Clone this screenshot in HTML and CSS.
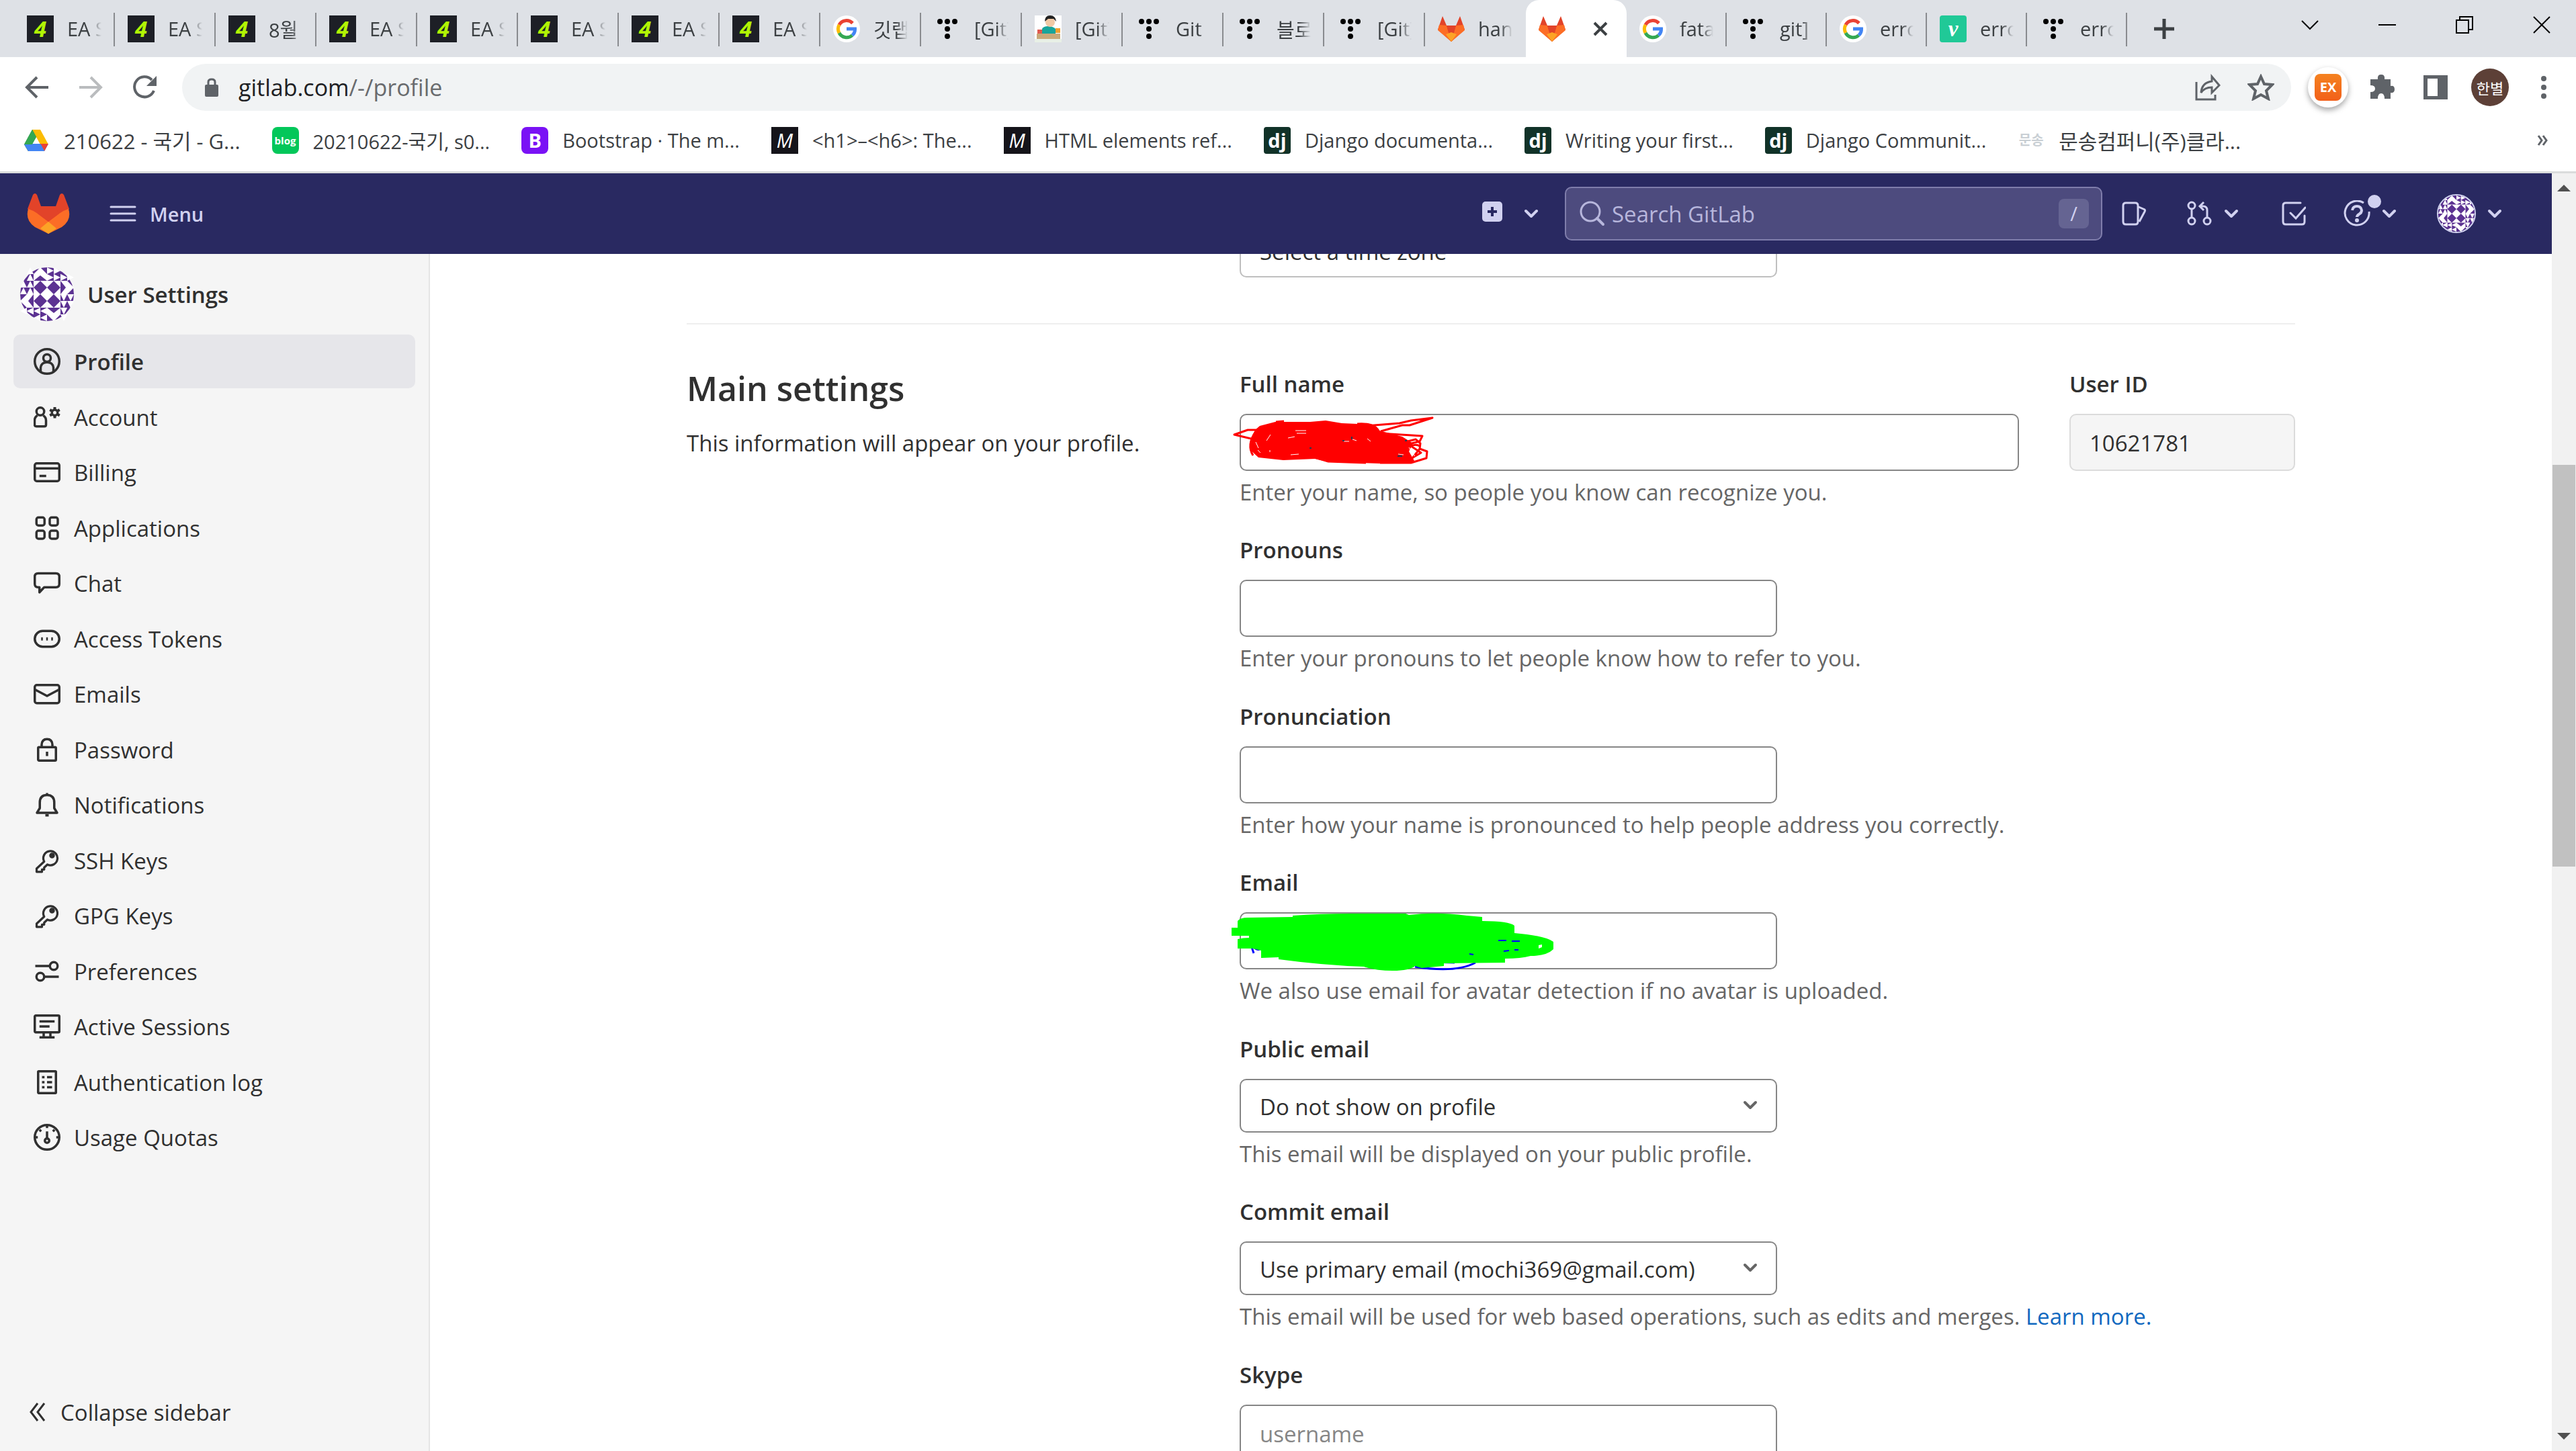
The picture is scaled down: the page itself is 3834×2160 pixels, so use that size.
FILE: index.html
```html
<!DOCTYPE html>
<html lang="en">
<head>
  <meta charset="UTF-8" />
  <meta name="viewport" content="width=device-width, initial-scale=1.0"/>
  <title>Edit Profile · User Settings · GitLab</title>
  <link rel="stylesheet" href="styles.css">
</head>
<body>
  <!-- shared icons -->
  <svg class="sprite" width="0" height="0" aria-hidden="true">
    <symbol id="google" viewBox="0 0 40 40">
      <circle cx="20" cy="20" r="20" fill="#fff"/>
      <g fill="none" stroke-width="5">
        <path d="M29 11.500A12.500 12.500 0 0 0 9 14" stroke="#ea4335"/>
        <path d="M9 14a12.500 12.500 0 0 0 0 12" stroke="#fbbc05"/>
        <path d="M9 26a12.500 12.500 0 0 0 19.500 3.500" stroke="#34a853"/>
        <path d="M28.500 29.500a12 12 0 0 0 4-9.500H20" stroke="#4285f4"/>
      </g>
    </symbol>
    <symbol id="tistory" viewBox="0 0 40 40">
      <circle cx="9" cy="9" r="4"/><circle cx="20" cy="9" r="4"/><circle cx="31" cy="9" r="4"/>
      <circle cx="20" cy="20" r="4"/><circle cx="20" cy="31" r="4"/>
    </symbol>
    <symbol id="fox" viewBox="0 0 40 40">
      <path d="M7 1 0 21l20 18 20-18L33 1l-6 14H13z" fill="#e24329"/>
      <path d="M2 14 0 22l20 17-7-24zM38 14l2 8-20 17 7-24z" fill="#fc6d26"/>
      <path d="M13 15h14l-7 24z" fill="#e24329"/>
      <path d="m12 28 8 11 8-11-8-3z" fill="#fca326"/>
    </symbol>
    <symbol id="person" viewBox="0 0 40 40">
      <path fill="#fff" d="M0 0h40v40H0z"/>
      <path fill="#e8f0e6" d="M0 35h40v5H0z"/>
      <path fill="#18a59b" d="M11 29V20q2-4 9-4t11 4v9z"/>
      <path fill="#c9a878" d="M3 27h35v8H3z"/>
      <circle cx="23" cy="10" r="7" fill="#f1c9a5"/>
      <path fill="#222" d="M15 9q0-9 8-9t9 9l-4-4h-8z"/>
      <path fill="#e05a4f" d="M4 21h7v6H4z"/><path fill="#f0a030" d="M31 19h7v7h-7z"/>
    </symbol>
    <symbol id="chevron" viewBox="0 0 30 30">
      <path d="m7 11 8 8 8-8" fill="none" stroke="currentColor" stroke-width="4" stroke-linecap="round" stroke-linejoin="round"/>
    </symbol>
    <symbol id="quadrant" viewBox="-4 -4 8 8" overflow="visible">
      <path d="M0-4l1 .5-1 .5zM1-4l1 .5-1 .5zM0-3l1 .5-1 .5zM1-3l1 .5-1 .5zM-2-3l1-1 1 1v1l-1-.8-1 .8zM2-3l1 .5-1 .5zM3-3l.6.5-.6.5zM-3-3l.5-1 .5 1zM-3-2l.5-1 .5 1z"/>
    </symbol>
    <symbol id="identicon" viewBox="-4 -4 8 8">
      <circle r="4" fill="#5c3292"/>
      <g fill="#fff">
        <g><use href="#quadrant" x="-4" y="-4" width="8" height="8"/></g>
        <g transform="rotate(90)"><use href="#quadrant" x="-4" y="-4" width="8" height="8"/></g>
        <g transform="rotate(180)"><use href="#quadrant" x="-4" y="-4" width="8" height="8"/></g>
        <g transform="rotate(270)"><use href="#quadrant" x="-4" y="-4" width="8" height="8"/></g>
        <path d="M-2-2h4v4h-4z"/>
      </g>
      <path d="m-1-2 1 1-1 1-1-1zM1-2l1 1-1 1-1-1zM-1 0l1 1-1 1-1-1zM1 0l1 1-1 1-1-1z" fill="#5c3292"/>
    </symbol>
    <symbol id="key" viewBox="0 0 16 16">
      <path d="M6.300 8.600 1.800 12.800V14.700H5V13.300H6.300V12.200L8.200 10.400A4.200 4.200 0 1 0 6.300 8.600z" fill="none" stroke="currentColor" stroke-width="1.300"/>
      <circle cx="11" cy="5" r="1" fill="currentColor"/>
    </symbol>
  </svg>

  <header class="browser">
    <div class="tab-strip">
      <div class="tab"><span class="favicon ea">4</span><span class="tab-title">EA SP</span></div>
      <div class="tab"><span class="favicon ea">4</span><span class="tab-title">EA SP</span></div>
      <div class="tab"><span class="favicon ea">4</span><span class="tab-title">8월</span></div>
      <div class="tab"><span class="favicon ea">4</span><span class="tab-title">EA SP</span></div>
      <div class="tab"><span class="favicon ea">4</span><span class="tab-title">EA SP</span></div>
      <div class="tab"><span class="favicon ea">4</span><span class="tab-title">EA SP</span></div>
      <div class="tab"><span class="favicon ea">4</span><span class="tab-title">EA SP</span></div>
      <div class="tab"><span class="favicon ea">4</span><span class="tab-title">EA SP</span></div>
      <div class="tab"><svg class="favicon"><use href="#google"/></svg><span class="tab-title">깃랩</span></div>
      <div class="tab"><svg class="favicon"><use href="#tistory"/></svg><span class="tab-title">[Git]</span></div>
      <div class="tab"><svg class="favicon"><use href="#person"/></svg><span class="tab-title">[Git]</span></div>
      <div class="tab"><svg class="favicon"><use href="#tistory"/></svg><span class="tab-title">Git</span></div>
      <div class="tab"><svg class="favicon"><use href="#tistory"/></svg><span class="tab-title">블로</span></div>
      <div class="tab"><svg class="favicon"><use href="#tistory"/></svg><span class="tab-title">[Git]</span></div>
      <div class="tab no-line"><svg class="favicon"><use href="#fox"/></svg><span class="tab-title">han</span></div>
      <div class="tab active">
        <svg class="favicon"><use href="#fox"/></svg>
        <button class="tab-close" aria-label="Close tab"><svg viewBox="0 0 22 22"><path d="m2 2 18 18M20 2 2 20" stroke="#3c4043" stroke-width="4"/></svg></button>
      </div>
      <div class="tab"><svg class="favicon"><use href="#google"/></svg><span class="tab-title">fatal</span></div>
      <div class="tab"><svg class="favicon"><use href="#tistory"/></svg><span class="tab-title">git]</span></div>
      <div class="tab"><svg class="favicon"><use href="#google"/></svg><span class="tab-title">error</span></div>
      <div class="tab"><span class="favicon velog">v</span><span class="tab-title">error</span></div>
      <div class="tab"><svg class="favicon"><use href="#tistory"/></svg><span class="tab-title">error</span></div>
      <button class="new-tab" aria-label="New tab"><svg viewBox="0 0 30 30"><path d="M15 0v30M0 15h30" stroke="#3c4043" stroke-width="5"/></svg></button>
      <div class="window-buttons">
        <button aria-label="Search tabs"><svg viewBox="0 0 26 26"><path d="m1 7 12 12L25 7"/></svg></button>
        <button aria-label="Minimize"><svg viewBox="0 0 26 26"><path d="M0 13h26"/></svg></button>
        <button aria-label="Restore"><svg viewBox="0 0 26 26"><path d="M1 6h18v19H1zM6 6V1h19v19h-6"/></svg></button>
        <button aria-label="Close"><svg viewBox="0 0 26 26"><path d="m1 1 24 24M25 1 1 25"/></svg></button>
      </div>
    </div>

    <div class="toolbar">
      <button aria-label="Back"><svg viewBox="0 0 40 40"><path d="M37 20H6M20 5 5 20l15 15" fill="none" stroke="#5f6368" stroke-width="4"/></svg></button>
      <button aria-label="Forward"><svg viewBox="0 0 40 40"><path d="M3 20h31M20 5l15 15-15 15" fill="none" stroke="#babcbe" stroke-width="4"/></svg></button>
      <button aria-label="Reload"><svg viewBox="0 0 40 40"><path d="M34 25a15 15 0 1 1-3-16" fill="none" stroke="#5f6368" stroke-width="4"/><path d="M38 3v15H23z" fill="#5f6368"/></svg></button>
      <div class="address">
        <svg class="lock" viewBox="0 0 20 28"><path d="M2 10h16q2 0 2 2v14q0 2-2 2H2q-2 0-2-2V12q0-2 2-2z" fill="#5f6368"/><path d="M5 11V6q0-4 5-4t5 4v5" fill="none" stroke="#5f6368" stroke-width="3"/></svg>
        <span class="url">gitlab.com<span>/-/profile</span></span>
        <button aria-label="Share"><svg viewBox="0 0 40 40"><path d="M4 12v26h28v-7M11 28q1-15 16-17V4l11 13-11 11v-8q-11 0-16 8z" fill="none" stroke="#5f6368" stroke-width="3"/></svg></button>
        <button aria-label="Bookmark"><svg viewBox="0 0 40 40"><path d="m20 4 5 11 12 1-9 9 3 12-11-6-11 6 3-12-9-9 12-1z" fill="none" stroke="#5f6368" stroke-width="4"/></svg></button>
      </div>
      <button class="ext" aria-label="EX extension"><span>EX</span></button>
      <div class="actions">
        <button aria-label="Extensions"><svg viewBox="0 0 40 40"><path d="M5 8h9q-1-7 5-7t5 7h9v10q6-1 6 5t-6 5v9H24q0-8-5-8t-5 8H3V27q7 0 7-5t-7-5V8z" fill="#5f6368"/></svg></button>
        <button aria-label="Side panel"><svg viewBox="0 0 40 40"><path d="M2 2h36v36H2zM8 7v26h15V7z" fill="#5f6368" fill-rule="evenodd"/></svg></button>
      </div>
      <button class="account">한별</button>
      <button class="more" aria-label="More"><svg viewBox="0 0 8 34"><circle cx="4" cy="4" r="4"/><circle cx="4" cy="17" r="4"/><circle cx="4" cy="30" r="4"/></svg></button>
    </div>

    <nav class="bookmarks">
      <a href="#" class="ko"><svg class="favicon" viewBox="0 0 40 40"><path d="M14 4h12L8 36 2 26z" fill="#188038"/><path d="M14 4h12l12 22H26z" fill="#fbbc04"/><path d="M8 25h30l-6 11H8z" fill="#4285f4"/><path d="m2 25 6 11 6-11zM38 25l-6 11-6-11z" fill="#ea4335"/><path d="M2 26 14 4l6 11L8 36z" fill="#34a853"/><path d="m2 26 6 10h24l-5-10z" fill="#4285f4"/></svg><span>210622 - 국기 - G...</span></a>
      <a href="#"><span class="favicon blog">blog</span><span>20210622-국기, s0...</span></a>
      <a href="#"><span class="favicon bs">B</span><span>Bootstrap · The m...</span></a>
      <a href="#"><span class="favicon mdn">M</span><span>&lt;h1&gt;–&lt;h6&gt;: The...</span></a>
      <a href="#"><span class="favicon mdn">M</span><span>HTML elements ref...</span></a>
      <a href="#"><span class="favicon dj">dj</span><span>Django documenta...</span></a>
      <a href="#"><span class="favicon dj">dj</span><span>Writing your first...</span></a>
      <a href="#"><span class="favicon dj">dj</span><span>Django Communit...</span></a>
      <a href="#" class="ko"><span class="favicon ms">문송</span><span>문송컴퍼니(주)클라...</span></a>
      <button class="overflow" aria-label="More bookmarks"><svg viewBox="0 0 16 16"><path d="m2 1 5 7-5 7M9 1l5 7-5 7" fill="none" stroke="#5f6368" stroke-width="3"/></svg></button>
    </nav>
  </header>

  <div class="viewport">
    <div class="page">
      <header class="navbar">
        <a href="#" class="logo" aria-label="GitLab">
          <svg viewBox="0 0 64 60"><path d="M9 2q3-4 6 0l6 17h22l6-17q3-4 6 0l8 21-31 30L1 23z" fill="#e24329"/><path d="M2 23q-5 17 10 27l20 10 20-10q15-10 10-27-7 2-14 7L32 42 16 30q-7-5-14-7z" fill="#fc6d26"/><path d="m20 52 12-10 12 10-12 8z" fill="#fca326"/><path d="M32 42 16 30l6-11h20l6 11z" fill="#e24329"/></svg>
        </a>
        <button class="menu"><svg viewBox="0 0 40 40"><path d="M2 10h36M2 20h36M2 30h36" stroke="currentColor" stroke-width="3" stroke-linecap="round"/></svg>Menu</button>
        <button class="new" aria-label="Create new"><svg viewBox="0 0 40 40"><rect x="5" y="2" width="30" height="30" rx="5" fill="currentColor"/><path d="M20 10v14M13 17h14" stroke="#292961" stroke-width="4"/></svg><svg class="chev"><use href="#chevron"/></svg></button>
        <div class="search">
          <svg viewBox="0 0 40 40"><circle cx="18" cy="17" r="14" fill="none" stroke="currentColor" stroke-width="3"/><path d="m28 27 9 9" stroke="currentColor" stroke-width="4" stroke-linecap="round"/></svg>
          <input type="text" placeholder="Search GitLab" aria-label="Search GitLab" />
          <kbd>/</kbd>
        </div>
        <div class="nav-icons">
          <a href="#" aria-label="Issues"><svg viewBox="0 0 40 40"><path d="M7 4h14q4 0 4 4v24q0 4-4 4H7q-4 0-4-4V8q0-4 4-4zM26 10l9 4q1 1 0 3l-8 15" fill="none" stroke="currentColor" stroke-width="3"/></svg></a>
          <a href="#" aria-label="Merge requests"><svg viewBox="0 0 40 40"><g fill="none" stroke="currentColor" stroke-width="3"><circle cx="9" cy="8" r="5"/><circle cx="9" cy="31" r="5"/><circle cx="32" cy="31" r="5"/><path d="M9 13v13M32 26V15q0-6-6-6h-4M27 3l-6 6 6 6"/></g></svg><svg class="chev"><use href="#chevron"/></svg></a>
          <a href="#" aria-label="To-do list"><svg viewBox="0 0 40 40"><path d="M32 4H10q-4 0-4 4v24q0 4 4 4h24q4 0 4-4v-9M17 19l8 8L39 11" fill="none" stroke="currentColor" stroke-width="3" stroke-linecap="round"/></svg></a>
          <button class="help" aria-label="Help"><svg viewBox="0 0 40 40"><path d="M30 4A18 18 0 1 0 38 17" fill="none" stroke="currentColor" stroke-width="3"/><path d="M13 15q1-6 7-6t7 6q0 4-4 6-3 2-3 4" fill="none" stroke="currentColor" stroke-width="4"/><circle cx="20" cy="30" r="3" fill="currentColor"/></svg><i class="dot"></i><svg class="chev"><use href="#chevron"/></svg></button>
          <button aria-label="Account"><svg class="avatar"><use href="#identicon"/></svg><svg class="chev"><use href="#chevron"/></svg></button>
        </div>
      </header>

      <div class="content">
        <aside class="sidebar">
          <a href="#" class="context"><svg class="avatar"><use href="#identicon"/></svg>User Settings</a>
          <ul>
            <li><a href="#" class="current"><svg viewBox="0 0 16 16"><circle cx="8" cy="8" r="7.300"/><circle cx="8" cy="6" r="2.200"/><path d="M4.200 14v-2.300Q4.600 8.500 8 8.500t3.800 3.200V14"/></svg>Profile</a></li>
            <li><a href="#"><svg viewBox="0 0 16 16"><circle cx="4" cy="4.600" r="2.300"/><path d="M2.300 7Q.6 8 .6 10v2.500q0 1 1 1h4.800q1 0 1-1V10q0-2-1.700-3"/><circle cx="12.600" cy="5.300" r="1.700"/><path d="M12.600 2v1.500M12.600 7v1.600M9.700 3.600l1.400.8M14.100 6.200l1.400.8M9.700 7l1.400-.8M14.100 4.400l1.400-.8" stroke-width="1.600"/></svg>Account</a></li>
            <li><a href="#"><svg viewBox="0 0 16 16"><rect x=".7" y="2.700" width="14.600" height="10.600" rx="1.200"/><path d="M1 5.700h14M3.500 10.200h4"/></svg>Billing</a></li>
            <li><a href="#"><svg viewBox="0 0 16 16"><rect x="1.700" y="1.700" width="4.800" height="4.800" rx="1.200"/><rect x="9.600" y="1.700" width="4.800" height="4.800" rx="1.200"/><rect x="1.700" y="9.600" width="4.800" height="4.800" rx="1.200"/><rect x="9.600" y="9.600" width="4.800" height="4.800" rx="1.200"/></svg>Applications</a></li>
            <li><a href="#"><svg viewBox="0 0 16 16"><path d="M2.700 2.200h10.600q2 0 2 2v4.300q0 2-2 2H6.300L3.500 13.500v-3h-.8q-2 0-2-2V4.200q0-2 2-2z"/></svg>Chat</a></li>
            <li><a href="#"><svg viewBox="0 0 16 16"><rect x=".7" y="3.300" width="14.600" height="9.400" rx="4.700"/><path d="M4.500 8h1M7.500 8h1M10.500 8h1" stroke-width="1.900"/></svg>Access Tokens</a></li>
            <li><a href="#"><svg viewBox="0 0 16 16"><rect x=".7" y="2.700" width="14.600" height="10.800" rx="1.200"/><path d="m1 5.500 7 3.700 7-3.700"/></svg>Emails</a></li>
            <li><a href="#"><svg viewBox="0 0 16 16"><rect x="2.700" y="6.500" width="10.600" height="8" rx=".6"/><path d="M4.800 6.200V5Q5 1.700 8 1.700t3.200 3.300v1.200M8 9.200v2.600" /></svg>Password</a></li>
            <li><a href="#"><svg viewBox="0 0 16 16"><path d="M8 2.200q-4.300 0-4.300 4.500V10L2 12.800h12L12.300 10V6.700Q12.300 2.200 8 2.200zM8 1v1M7 14.300h2"/></svg>Notifications</a></li>
            <li><a href="#"><svg><use href="#key"/></svg>SSH Keys</a></li>
            <li><a href="#"><svg><use href="#key"/></svg>GPG Keys</a></li>
            <li><a href="#"><svg viewBox="0 0 16 16"><circle cx="12" cy="4.800" r="2.300"/><circle cx="4" cy="11.200" r="2.300"/><path d="M1 4.800h8.500M6.500 11.200H15"/></svg>Preferences</a></li>
            <li><a href="#"><svg viewBox="0 0 16 16"><rect x=".7" y="1.500" width="14.600" height="10" rx=".6"/><path d="M3.500 5h9M3.500 8h6M3.500 14.500h9M6 12v2M10 12v2"/></svg>Active Sessions</a></li>
            <li><a href="#"><svg viewBox="0 0 16 16"><rect x="2.700" y="1.500" width="10.600" height="13" rx=".4"/><path d="M5 5h1.500M8 5h3M5 8h1.500M8 8h3M5 11h1.500M8 11h3"/></svg>Authentication log</a></li>
            <li><a href="#"><svg viewBox="0 0 16 16"><circle cx="8" cy="8" r="7.300"/><path d="M8 4.500V9M8 1v1.500M1 8h1.500M13.500 8H15M3.500 3.500l1 1M12.500 3.500l-1 1"/><circle cx="8" cy="10" r="1.300"/></svg>Usage Quotas</a></li>
          </ul>
          <button class="collapse"><svg viewBox="0 0 24 30"><path d="M12 2 2 15l10 13M22 2 12 15l10 13" fill="none" stroke="currentColor" stroke-width="3"/></svg>Collapse sidebar</button>
        </aside>

        <main>
          <form class="container">
            <section class="settings time">
              <div></div>
              <div class="select"><select aria-label="Time zone"><option>Select a time zone</option></select><svg><use href="#chevron"/></svg></div>
            </section>
            <hr>
            <section class="settings">
              <div>
                <h4>Main settings</h4>
                <p>This information will appear on your profile.</p>
              </div>
              <div>
                <div class="row">
                  <div class="form-group name">
                    <label for="name">Full name</label>
                    <div class="field">
                      <input type="text" id="name" />
                      <svg class="scribble" viewBox="0 0 300 85">
                        <path fill="red" d="m33 24 7-6 23-6h52l23-2 24 4 23 1 20 1 13 9 34 9 16 10-6 12 8 14-8 4-44 0-26-1-57-3-13-3-47 2-37-4-13-12 2-14z"/>
                        <g fill="none" stroke="red" stroke-width="3" stroke-linejoin="round">
                          <path d="M43 24H22L2 31l25 6M198 18l50-4 17-4 32-4-34 11h-11l-32 9M185 15q28-2 33 13M218 29l64 4-4 8-20 5M256 42l16-4 7 6-1 8 11 4-1 10-23 7h-46M278 52l-14 18M250 56q20-14 28-8M262 46l18 12-24 14"/>
                          <path d="M34 26q-14 20-4 36M64 12l12-1M122 65l20 6 56 2"/>
                        </g>
                        <path fill="none" stroke="#fff" stroke-width="1" d="m34 42 4 9M37 54l4 4M56 31l-6 9M55 54v3M93 25h16M95 29h14M82 36l10-2M178 38l6 2M200 37l5 4M246 60l8 1M262 50l3 5M268 60l3 3M165 41h8M86 61l12-1"/>
                        <path stroke="#233a55" stroke-width="2" d="M114 51h3M177 34v4M163 40h3M256 40h3M245 63h7"/>
                      </svg>
                    </div>
                    <small>Enter your name, so people you know can recognize you.</small>
                  </div>
                  <div class="form-group id">
                    <label for="uid">User ID</label>
                    <input type="text" id="uid" value="10621781" readonly />
                  </div>
                </div>
                <div class="form-group">
                  <label for="pronouns">Pronouns</label>
                  <input type="text" id="pronouns" />
                  <small>Enter your pronouns to let people know how to refer to you.</small>
                </div>
                <div class="form-group">
                  <label for="pronunciation">Pronunciation</label>
                  <input type="text" id="pronunciation" />
                  <small>Enter how your name is pronounced to help people address you correctly.</small>
                </div>
                <div class="form-group">
                  <label for="email">Email</label>
                  <div class="field">
                    <input type="text" id="email" />
                    <svg class="scribble wide" viewBox="0 0 500 85">
                      <path fill="none" stroke="#00f" stroke-width="3" d="M33 52l3 9M36 52q8 8 14-2M276 81q60 10 90-6M255 73l80 2"/>
                      <path fill="lime" d="M3 23h9V13q4-5 15-5l67-1V5q40-3 86-3h82l5 2q40-5 86 1l23 2v6q40 0 48 7v11q46 4 58 13v11q-10 10-34 10-14 4-38 4v6l-91 1v4l-33 3-10-3q-8 7-33 7t-43-6q-60-2-127-11v-3l-26 1V57l-12-3H12V40q8-2 17-2v-3H3z"/>
                      <path fill="#fff" d="m460 49 5-1v4l-5 2z"/>
                      <path fill="none" stroke="#00f" stroke-width="2" d="M400 42h12M420 43h12M357 62l6 1M408 58l8-1M424 56h6"/>
                    </svg>
                  </div>
                  <small>We also use email for avatar detection if no avatar is uploaded.</small>
                </div>
                <div class="form-group">
                  <label for="public">Public email</label>
                  <div class="select"><select id="public"><option>Do not show on profile</option></select><svg><use href="#chevron"/></svg></div>
                  <small>This email will be displayed on your public profile.</small>
                </div>
                <div class="form-group">
                  <label for="commit">Commit email</label>
                  <div class="select"><select id="commit"><option>Use primary email (mochi369@gmail.com)</option></select><svg><use href="#chevron"/></svg></div>
                  <small>This email will be used for web based operations, such as edits and merges. <a href="#">Learn more.</a></small>
                </div>
                <div class="form-group">
                  <label for="skype">Skype</label>
                  <input type="text" id="skype" placeholder="username" />
                </div>
              </div>
            </section>
          </form>
        </main>
      </div>
    </div>

    <div class="scrollbar">
      <svg viewBox="0 0 20 10"><path d="m10 0 10 10H0z" fill="#505050"/></svg>
      <div class="track"><div class="thumb"></div></div>
      <svg viewBox="0 0 20 10"><path d="M0 0h20L10 10z" fill="#505050"/></svg>
    </div>
  </div>
</body>
</html>
```
FILE: styles.css
```css
* {
  box-sizing: border-box;
}

body {
  margin: 0;
  height: 100vh;
  display: flex;
  flex-direction: column;
  overflow: hidden;
  font-family: "Open Sans", "Noto Sans CJK KR", sans-serif;
  font-size: 33px;
  color: #303030;
  background: #fff;
}

.sprite {
  position: absolute;
}

button {
  font: inherit;
  color: inherit;
  background: none;
  border: 0;
  padding: 0;
  display: flex;
  align-items: center;
}

a {
  color: inherit;
  text-decoration: none;
}

svg {
  display: block;
  flex: none;
}

/* browser */
.tab-strip {
  display: flex;
  align-items: center;
  height: 85px;
  padding-left: 21px;
  background: #dee1e6;
  font-size: 29px;
}

.favicon {
  flex: none;
  width: 40px;
  height: 40px;
  line-height: 40px;
  text-align: center;
  font-weight: 700;
}

.tab {
  position: relative;
  flex: none;
  display: flex;
  align-items: center;
  gap: 20px;
  width: 150px;
  height: 85px;
  padding: 0 20px 0 19px;
  color: #3c4043;
}

.tab::after {
  content: "";
  position: absolute;
  right: 0;
  top: 19px;
  width: 2px;
  height: 50px;
  background: #898b8f;
}

.tab.no-line::after,
.tab.active::after {
  display: none;
}

.tab.active {
  background: #fff;
  border-radius: 20px 20px 0 0;
  justify-content: space-between;
  padding-right: 28px;
}

.tab.active ~ .tab {
  width: 149px;
}

.tab-close svg {
  width: 22px;
  height: 22px;
}

.tab-title {
  flex: 1;
  overflow: hidden;
  white-space: nowrap;
  -webkit-mask-image: linear-gradient(to right, #000 65%, transparent);
  mask-image: linear-gradient(to right, #000 65%, transparent);
}

.ea {
  background: #1d1f26;
  color: #b1f404;
  font-style: italic;
  font-size: 33px;
}

.velog {
  background: #20c997;
  color: #fff;
  border-radius: 4px;
  font-family: "Liberation Serif", serif;
  font-style: italic;
  font-size: 33px;
}

.new-tab {
  margin-left: 40px;
}

.new-tab svg {
  width: 30px;
  height: 30px;
}

.window-buttons {
  display: flex;
  gap: 89px;
  margin-left: auto;
  padding: 0 38px 12px 0;
}

.window-buttons svg {
  width: 26px;
  height: 26px;
  fill: none;
  stroke: #000;
  stroke-width: 2;
}

.toolbar {
  display: flex;
  align-items: center;
  gap: 40px;
  height: 90px;
  padding: 0 44px 0 35px;
}

.toolbar button svg {
  width: 40px;
  height: 40px;
}

.address {
  flex: 1;
  display: flex;
  align-items: center;
  gap: 40px;
  height: 70px;
  margin-left: -4px;
  padding: 0 25px 0 34px;
  border-radius: 35px;
  background: #f1f3f4;
}

.lock {
  width: 20px;
  height: 28px;
}

.url {
  flex: 1;
  margin-left: -10px;
  font-size: 34px;
  color: #202124;
}

.url span {
  color: #696b6e;
}

.toolbar .ext {
  width: 60px;
  height: 60px;
  margin-left: -15px;
  justify-content: center;
  border-radius: 50%;
  background: #fff;
  box-shadow: 0 4px 8px rgba(0, 0, 0, 0.35);
}

.ext span {
  width: 40px;
  height: 40px;
  line-height: 40px;
  border-radius: 8px;
  text-align: center;
  font-size: 20px;
  font-weight: 700;
  color: #fff;
  background: linear-gradient(#f58220, #f2601a);
}

.actions {
  display: flex;
  gap: 40px;
  margin-left: -10px;
}

.toolbar .account {
  width: 56px;
  height: 56px;
  margin-left: -7px;
  justify-content: center;
  border-radius: 50%;
  background: #5d4037;
  color: #fff;
  font-size: 22px;
  white-space: nowrap;
}

.toolbar .more svg {
  width: 8px;
  height: 34px;
  fill: #5f6368;
}

.toolbar .more {
  margin-left: 8px;
}

.bookmarks {
  display: flex;
  align-items: center;
  gap: 47px;
  height: 83px;
  padding: 0 42px 13px 34px;
  border-bottom: 3px solid #dadcdc;
  font-size: 29px;
  color: #3c4043;
}

.bookmarks a {
  display: flex;
  align-items: center;
  gap: 21px;
  white-space: nowrap;
}

.bookmarks .ko {
  font-size: 31px;
}

.blog {
  border-radius: 8px;
  background: #03c75a;
  color: #fff;
  font-size: 15px;
}

.bs {
  border-radius: 8px;
  background: #7a12f5;
  color: #fff;
}

.mdn {
  background: #15141a;
  color: #fff;
  font-style: italic;
  font-weight: 400;
}

.dj {
  border-radius: 4px;
  background: #113228;
  color: #fff;
}

.ms {
  color: #c9cfd4;
  font-size: 20px;
}

.overflow {
  margin-left: auto;
}

.overflow svg {
  width: 16px;
  height: 16px;
}

/* page */
.viewport {
  flex: 1;
  min-height: 0;
  display: flex;
}

.page {
  flex: 1;
  min-width: 0;
  display: flex;
  flex-direction: column;
}

.navbar {
  flex: none;
  display: flex;
  align-items: center;
  height: 120px;
  padding: 0 70px 0 40px;
  background: #292961;
  color: #d1d1f0;
}

.navbar svg {
  width: 40px;
  height: 40px;
}

.navbar .logo svg {
  width: 64px;
  height: 60px;
}

.menu {
  gap: 20px;
  margin-left: 59px;
  font-size: 29px;
  font-weight: 600;
}

.navbar .chev {
  width: 30px;
  height: 30px;
}

.new {
  gap: 23px;
  margin-left: auto;
}

.search {
  display: flex;
  align-items: center;
  width: 800px;
  height: 80px;
  margin: 0 28px 0 35px;
  padding: 0 18px;
  border: 2px solid #7f7dab;
  border-radius: 10px;
  background: #4d4b7e;
  color: #b7b6dc;
}

.search input {
  flex: 1;
  min-width: 0;
  padding: 0 10px;
  border: 0;
  background: none;
  font: inherit;
}

.search input::placeholder {
  color: #b7b6dc;
}

.search kbd {
  width: 45px;
  height: 44px;
  line-height: 44px;
  border-radius: 8px;
  text-align: center;
  font-family: inherit;
  font-size: 29px;
  background: #656492;
  color: #d1d1f0;
}

.nav-icons {
  display: flex;
  align-items: center;
  gap: 56px;
}

.nav-icons a,
.nav-icons button {
  position: relative;
  display: flex;
  align-items: center;
  gap: 13px;
}

.nav-icons .avatar {
  width: 58px;
  height: 58px;
  border: 2px solid #d1d1f0;
  border-radius: 50%;
}

.dot {
  position: absolute;
  left: 36px;
  top: -8px;
  width: 20px;
  height: 20px;
  border-radius: 50%;
  background: #d1d1f0;
}

.content {
  flex: 1;
  min-height: 0;
  display: flex;
}

.sidebar {
  flex: none;
  display: flex;
  flex-direction: column;
  width: 640px;
  padding: 20px 20px 28px;
  border-right: 2px solid #e5e5e5;
  background: #f5f5f5;
}

.context {
  display: flex;
  align-items: center;
  gap: 20px;
  height: 80px;
  margin: 0 0 20px 10px;
  font-weight: 600;
}

.context .avatar {
  width: 80px;
  height: 80px;
}

.sidebar ul {
  margin: 0;
  padding: 0;
  list-style: none;
}

.sidebar li {
  margin-bottom: 2px;
}

.sidebar li:nth-child(odd) {
  margin-bottom: 3px;
}

.sidebar li a {
  display: flex;
  align-items: center;
  gap: 20px;
  height: 80px;
  padding: 0 30px;
  border-radius: 10px;
}

.sidebar li a.current {
  background: #e6e6ea;
  font-weight: 600;
}

.sidebar li svg {
  width: 40px;
  height: 40px;
  fill: none;
  stroke: currentColor;
  stroke-width: 1.4;
  stroke-linejoin: round;
}

.collapse {
  gap: 22px;
  height: 60px;
  margin-top: auto;
  padding-left: 24px;
}

.collapse svg {
  width: 24px;
  height: 30px;
}

main {
  flex: 1;
  min-width: 0;
  overflow: hidden;
}

.container {
  max-width: 2394px;
  margin: 0 auto;
}

.settings {
  display: grid;
  grid-template-columns: 748px 1fr;
  gap: 75px;
}

.time {
  margin-top: -45px;
}

hr {
  height: 2px;
  margin: 68px 0 65px;
  border: 0;
  background: #eee;
}

h4 {
  margin: 0;
  font-size: 50px;
  line-height: 60px;
  font-weight: 600;
}

p {
  margin: 30px 0 0;
  line-height: 44px;
}

.row {
  display: flex;
  gap: 75px;
}

.name {
  flex: 1;
}

.id {
  width: 336px;
}

.form-group {
  margin-bottom: 40px;
}

.form-group:nth-child(even) {
  margin-bottom: 41px;
}

label {
  display: block;
  height: 48px;
  margin-bottom: 20px;
  line-height: 48px;
  font-weight: 600;
}

input,
select {
  display: block;
  width: 800px;
  height: 85px;
  padding: 2px 28px 0;
  border: 2px solid #868686;
  border-radius: 10px;
  background: #fff;
  font: inherit;
  color: #303030;
}

input::placeholder {
  color: #868686;
}

.row input {
  width: 100%;
}

.id input {
  border-color: #dbdbdb;
  background: #f5f5f5;
}

.select {
  position: relative;
  width: 800px;
}

select {
  height: 80px;
  appearance: none;
}

.time select {
  border-color: #bfbfbf;
}

.select svg {
  position: absolute;
  right: 25px;
  top: 24px;
  width: 30px;
  height: 30px;
  color: #666;
}

.field {
  position: relative;
}

.scribble {
  position: absolute;
  left: -10px;
  top: 0;
  width: 300px;
  height: 85px;
  overflow: visible;
}

.scribble.wide {
  left: -15px;
  width: 500px;
}

small {
  display: block;
  margin-top: 10px;
  font-size: 33px;
  line-height: 44px;
  color: #666;
}

small a {
  color: #1068bf;
}

.scrollbar {
  flex: none;
  display: flex;
  flex-direction: column;
  align-items: center;
  width: 36px;
  padding: 17px 0;
  background: #f1f1f1;
}

.scrollbar svg {
  width: 20px;
  height: 10px;
}

.track {
  flex: 1;
  width: 34px;
  padding-top: 407px;
}

.thumb {
  height: 598px;
  background: #c1c1c1;
}
```
